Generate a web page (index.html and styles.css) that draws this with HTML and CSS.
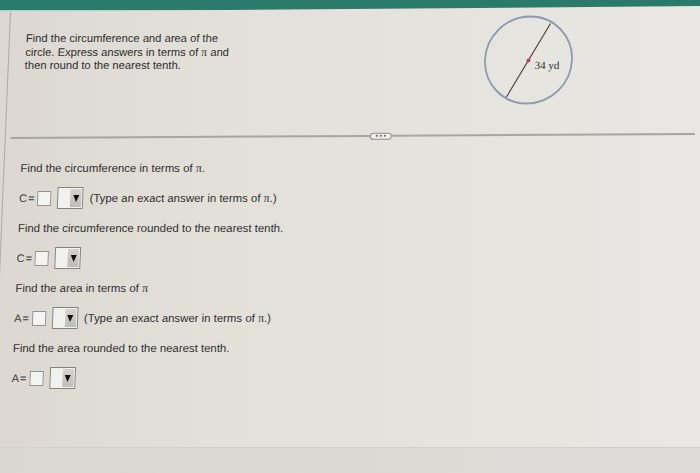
FILE: index.html
```html
<!DOCTYPE html>
<html lang="en">
<head>
<meta charset="utf-8">
<title>Circumference and area</title>
<link rel="stylesheet" href="styles.css">
</head>
<body>
<div class="topbar"></div>
<div class="stage">
  <div class="panel">
    <section class="problem">
      <p class="prompt">Find the circumference and area of the<br>circle. Express answers in terms of <span class="pi">π</span> and<br>then round to the nearest tenth.</p>
      <svg class="figure" width="100" height="96" viewBox="0 0 100 96">
        <circle cx="49.5" cy="48" r="43.5" fill="none" stroke="#8f9bb0" stroke-width="1.8"/>
        <line x1="70" y1="11.5" x2="29" y2="85" stroke="#4f4242" stroke-width="1.2"/>
        <circle cx="49.5" cy="48.5" r="2" fill="#c8326e"/>
        <text x="56" y="57" class="label">34 yd</text>
      </svg>
    </section>
    <div class="divider">
      <span class="rule rule-left"></span>
      <span class="more"><i></i><i></i><i></i></span>
      <span class="rule rule-right"></span>
    </div>
    <div class="answers">
      <p class="text">Find the circumference in terms of <span class="pi">π</span>.</p>
      <div class="row">
        <span class="var">C=</span><span class="box"></span><span class="select"><span class="arrow"></span></span>
        <span class="hint">(Type an exact answer in terms of <span class="pi">π</span>.)</span>
      </div>
      <p class="text">Find the circumference rounded to the nearest tenth.</p>
      <div class="row">
        <span class="var">C=</span><span class="box"></span><span class="select"><span class="arrow"></span></span>
      </div>
      <p class="text">Find the area in terms of <span class="pi">π</span></p>
      <div class="row">
        <span class="var">A=</span><span class="box"></span><span class="select"><span class="arrow"></span></span>
        <span class="hint">(Type an exact answer in terms of <span class="pi">π</span>.)</span>
      </div>
      <p class="text">Find the area rounded to the nearest tenth.</p>
      <div class="row">
        <span class="var">A=</span><span class="box"></span><span class="select"><span class="arrow"></span></span>
      </div>
    </div>
  </div>
</div>
<div class="footer"></div>
</body>
</html>
```

FILE: styles.css
```css
* { box-sizing: border-box; }

html, body {
  margin: 0;
  padding: 0;
}

body {
  width: 700px;
  height: 473px;
  overflow: hidden;
  font-family: "Liberation Sans", Arial, sans-serif;
  color: #2e2e2e;
  background: linear-gradient(90deg, #dcd8d1 0%, #e3e0da 30%, #e6e4df 70%, #e9e7e3 100%);
}

.topbar {
  height: 12px;
  background: linear-gradient(180deg, #2a7a6b 0%, #2c7c6e 80%, #9fc8be 80%, #cfe0da 100%);
  clip-path: polygon(0 0, 100% 0, 100% 50%, 0 100%);
}

.stage {
  height: 435px;
}

.panel {
  height: 100%;
  margin-left: 10px;
  border-left: 1px solid #aeaaa3;
  transform: skewX(-2.4deg);
  transform-origin: top left;
}

.problem {
  display: flex;
  justify-content: space-between;
  align-items: flex-start;
  height: 120px;
  padding-left: 16px;
}

.prompt {
  margin: 0;
  padding-top: 20px;
  font-size: 11.2px;
  line-height: 13.5px;
}

.pi {
  font-family: "Liberation Serif", "Times New Roman", serif;
  font-size: 1.05em;
}

.figure {
  display: block;
  margin-right: 119px;
}

.label {
  font-family: "Liberation Serif", "Times New Roman", serif;
  font-size: 11px;
  fill: #333;
}

.divider {
  display: flex;
  align-items: center;
  height: 8px;
  transform: rotate(-0.35deg);
}

.rule {
  height: 1.5px;
  background: #a7a5a0;
}

.rule-left {
  width: 359px;
  margin-left: 5px;
}

.rule-right {
  flex: 1;
}

.more {
  display: flex;
  align-items: center;
  justify-content: center;
  gap: 2.5px;
  width: 22px;
  height: 7px;
  border: 1px solid #8e8d8a;
  border-radius: 4px;
  background: #efeeeb;
}

.more i {
  display: block;
  width: 1.6px;
  height: 1.6px;
  border-radius: 50%;
  background: #6d6d6d;
}

.answers {
  padding-top: 13px;
  padding-left: 16px;
  font-size: 11.4px;
}

.text {
  margin: 0;
  height: 30px;
  line-height: 30px;
  white-space: nowrap;
}

.row {
  display: flex;
  align-items: center;
  height: 30px;
  margin: 0;
}

.var {
  font-size: 11px;
  letter-spacing: 1px;
  color: #3a3a3a;
  margin-right: 2px;
}

.box {
  width: 14px;
  height: 15px;
  border: 1px solid #939390;
  background: #f4f4f2;
  margin-right: 6px;
}

.select {
  display: flex;
  justify-content: flex-end;
  width: 26px;
  height: 22px;
  padding: 1px;
  border: 1px solid #85837f;
  background: #f1f1ef;
  margin-right: 6px;
}

.arrow {
  display: flex;
  align-items: center;
  justify-content: center;
  width: 11px;
  background: linear-gradient(180deg, #d4d3d0, #bdbcb9);
}

.arrow::before {
  content: "";
  width: 0;
  height: 0;
  border-left: 3.5px solid transparent;
  border-right: 3.5px solid transparent;
  border-top: 7px solid #111;
}

.hint {
  white-space: nowrap;
}

.footer {
  height: 26px;
  background: linear-gradient(90deg, #d9d7d1, #dedcd8);
  border-top: 1px solid #d2d0ca;
}
```
